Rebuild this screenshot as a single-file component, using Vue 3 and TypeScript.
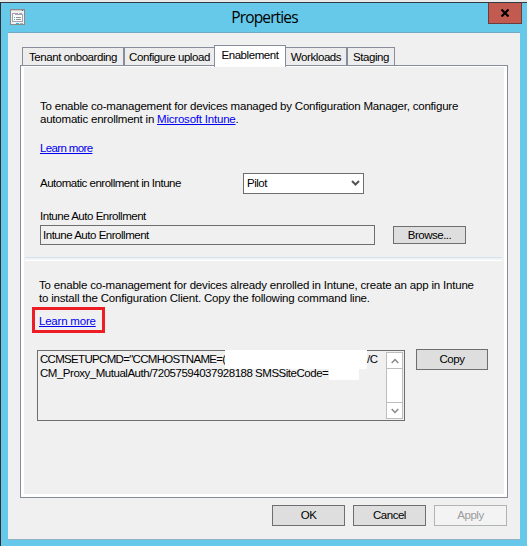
<template>
  <div class="desktop">
    <section class="window">
      <header class="titlebar">
        <svg class="app-icon" width="15" height="16" viewBox="0 0 15 16" shape-rendering="crispEdges">
          <rect x="0.5" y="0.5" width="14" height="15" fill="#f1f1f1" stroke="#8c8884" />
          <path d="M1 1.5H14" stroke="#d2d0cf" />
          <path d="M12 1.5H13" stroke="#4f5868" />
          <path d="M2.5 4.5H5.5V5.5H12.5V12.5H2.5Z" fill="#fafafa" stroke="#a3a3b2" />
          <path d="M6 4.5H8M9 4.5H12" stroke="#a3a3b2" />
          <path d="M4 8.5H5M4 10.5H5" stroke="#2cc3c8" />
          <path d="M6 8.5H11M6 10.5H11" stroke="#8e939c" />
          <path d="M6 14.5H9" stroke="#25c0e4" />
          <path d="M10 14.5H13" stroke="#b4aaa6" />
        </svg>
        <h1>Properties</h1>
        <button class="close" aria-label="Close">
          <svg width="10" height="8" viewBox="0 0 10 8">
            <path d="M1.5 0.5L8.5 7.5M8.5 0.5L1.5 7.5" stroke="#000" stroke-width="2.2" />
          </svg>
        </button>
      </header>

      <main class="client">
        <nav class="tabs">
          <button
            v-for="tab in tabs"
            :key="tab.id"
            :class="['tab', tab.id, { active: tab.id === activeTab }]"
            @click="activeTab = tab.id"
          >{{ tab.label }}</button>
        </nav>

        <div class="panel">
          <div class="page">
            <p class="intro">
              To enable co-management for devices managed by Configuration Manager, configure<br>
              automatic enrollment in <a href="#">Microsoft Intune</a>.
            </p>
            <p class="more dense"><a href="#">Learn more</a></p>

            <div class="enroll-row dense">
              <span class="enroll-label">Automatic enrollment in Intune</span>
              <div class="combo">
                <span>{{ enrollment }}</span>
                <svg width="9" height="7" viewBox="0 0 9 7">
                  <path d="M1 1L4.5 4.5L8 1" fill="none" stroke="#555" stroke-width="2" />
                </svg>
              </div>
            </div>

            <p class="field-label dense">Intune Auto Enrollment</p>
            <div class="field-row dense">
              <div class="field">Intune Auto Enrollment</div>
              <button class="btn browse">Browse...</button>
            </div>

            <div class="separator"></div>

            <p class="client-text">
              To enable co-management for devices already enrolled in Intune, create an app in Intune<br>
              to install the Configuration Client. Copy the following command line.
            </p>
            <div class="highlight"><a href="#">Learn more</a></div>

            <div class="command-row dense">
              <div class="command">
                <div class="command-text">
                  <div class="line first">
                    <span class="head">CCMSETUPCMD="CCMHOSTNAME=(</span>
                    <span class="mask host"></span>
                    <span>/C</span>
                  </div>
                  <div class="line">
                    <span class="tail">CM_Proxy_MutualAuth/72057594037928188 SMSSiteCode=</span>
                    <span class="mask site"></span>
                  </div>
                </div>
                <div class="scrollbar">
                  <span class="arrow">
                    <svg width="8" height="6" viewBox="0 0 8 6">
                      <path d="M0.7 5L4 1.5L7.3 5" fill="none" stroke="#888" stroke-width="1.5" />
                    </svg>
                  </span>
                  <span class="arrow">
                    <svg width="8" height="6" viewBox="0 0 8 6">
                      <path d="M0.7 1L4 4.5L7.3 1" fill="none" stroke="#888" stroke-width="1.5" />
                    </svg>
                  </span>
                </div>
              </div>
              <button class="btn copy">Copy</button>
            </div>
          </div>
        </div>

        <footer class="actions dense">
          <button class="btn">OK</button>
          <button class="btn">Cancel</button>
          <button class="btn" disabled>Apply</button>
        </footer>
      </main>
    </section>
  </div>
</template>

<script setup lang="ts">
import { ref } from 'vue'

type TabId = 'tenant' | 'upload' | 'enablement' | 'workloads' | 'staging'

const tabs: { id: TabId; label: string }[] = [
  { id: 'tenant', label: 'Tenant onboarding' },
  { id: 'upload', label: 'Configure upload' },
  { id: 'enablement', label: 'Enablement' },
  { id: 'workloads', label: 'Workloads' },
  { id: 'staging', label: 'Staging' },
]

const activeTab = ref<TabId>('enablement')
const enrollment = ref('Pilot')
</script>

<style>
body { margin: 0; overflow: hidden; }
</style>

<style scoped>
* { box-sizing: border-box; }
p, h1 { margin: 0; font-weight: normal; }
button { font: inherit; letter-spacing: inherit; color: inherit; padding: 0; border-radius: 0; }
a { color: #0000f0; text-decoration: underline; text-underline-offset: 1px; text-decoration-thickness: 1px; }

.desktop {
  width: 527px;
  height: 546px;
  padding-top: 2px;
  background: #e9e9e9;
  font: 11.5px/13px "Liberation Sans", Arial, sans-serif;
  letter-spacing: -0.21px;
  color: #000;
  white-space: nowrap;
}
.dense { letter-spacing: -0.48px; }
.window {
  display: flex;
  flex-direction: column;
  height: 544px;
  border-top: 1px solid #2f3a42;
  border-left: 1px solid #2f3038;
  background: #66c9e9;
}

.titlebar { display: flex; align-items: flex-start; height: 29px; padding: 0 5px 0 9px; }
.app-icon { margin-top: 6px; }
.titlebar h1 {
  flex: 1;
  padding-left: 16px;
  text-align: center;
  font: 15.5px/29px "Open Sans", "Noto Sans", sans-serif;
  letter-spacing: -0.85px;
}
.close {
  display: flex;
  align-items: center;
  justify-content: center;
  width: 34px;
  height: 21px;
  border: 1px solid #6f3a3b;
  border-top: 0;
  background: #c35a50;
}

.client {
  height: 508px;
  margin: 0 7px;
  padding: 12px 12px 0;
  border-top: 1px solid #72aac4;
  border-bottom: 1px solid #8fb3c4;
  background: #f0f0f0;
}
.tabs { display: flex; align-items: flex-end; height: 20px; padding-left: 2px; letter-spacing: -0.42px; }
.tab {
  height: 18px;
  border: 1px solid #898c9a;
  border-bottom: 0;
  background: #ededed;
  line-height: 18px;
}
.tab.tenant { width: 102px; }
.tab.upload { width: 90px; border-right: 0; }
.tab.workloads { width: 61px; border-left: 0; }
.tab.staging { width: 48px; }
.tab.enablement { width: 72px; }
.tab.active {
  position: relative;
  height: 22px;
  margin-bottom: -2px;
  padding-bottom: 3px;
  background: #fff;
}

.panel { height: 433px; border: 1px solid #898c9a; padding: 1px 3px 3px; background: #fff; }
.page { height: 427px; padding: 33px 2px 0 16px; background: #f0f0f0; }
.more { margin-top: 16px; letter-spacing: -0.64px; }

.enroll-row { display: flex; align-items: center; height: 21px; margin-top: 18px; }
.enroll-label { width: 203px; }
.combo {
  display: flex;
  align-items: center;
  justify-content: space-between;
  width: 121px;
  height: 21px;
  padding: 0 3px 0 3px;
  border: 1px solid #6e6e6e;
  background: #fff;
}

.field-label { margin-top: 16px; }
.field-row { display: flex; gap: 18px; margin-top: 2px; }
.field { width: 335px; height: 20px; padding-left: 2px; border: 1px solid #6e6e6e; line-height: 19px; }
.btn { width: 73px; height: 21px; border: 1px solid #6e6e6e; background: #dedede; line-height: 19px; }
.btn:disabled { border-color: #b0b4b4; background: #f3f3f3; color: #9c9c9c; }
.browse { height: 18px; margin-top: 1px; line-height: 17px; }

.separator {
  height: 4px;
  margin: 12px 0 0 -15px;
  border: solid #d5dfe7;
  border-width: 1px 0;
  background: #f0f4f8;
  border-bottom-color: #fff;
}

.client-text { margin: 18px 0 0 -1px; letter-spacing: -0.19px; }
.highlight {
  width: 73px;
  height: 26px;
  margin: 2px 0 0 -8px;
  padding-left: 4px;
  border: 3px solid #ee1c25;
  line-height: 23px;
}

.command-row { display: flex; gap: 11px; margin: 16px 0 0 -3px; }
.command {
  display: flex;
  justify-content: space-between;
  width: 368px;
  height: 71px;
  margin-top: 1px;
  padding-right: 1px;
  border: 1px solid #6e6e6e;
}
.line { display: flex; height: 13px; }
.line.first { height: 17px; line-height: 17px; }
.head { width: 187px; padding-left: 2px; letter-spacing: -0.69px; }
.tail { width: 291px; padding-left: 2px; line-height: 11px; }
.mask { background: #fff; }
.host { position: relative; width: 142px; height: 19px; margin-top: -1px; }
.site { position: relative; width: 30px; height: 12px; }
.scrollbar {
  display: flex;
  flex-direction: column;
  justify-content: space-between;
  width: 17px;
  height: 67px;
  margin-top: 1px;
  border: 1px solid #bdbdbd;
  background: #fff;
}
.arrow { display: flex; align-items: center; justify-content: center; height: 16px; border-bottom: 1px solid #bdbdbd; }
.arrow:last-child { border-top: 1px solid #bdbdbd; border-bottom: 0; }
.copy { width: 72px; }

.actions { display: flex; justify-content: flex-end; gap: 8px; padding: 7px 1px 0 0; }
</style>
